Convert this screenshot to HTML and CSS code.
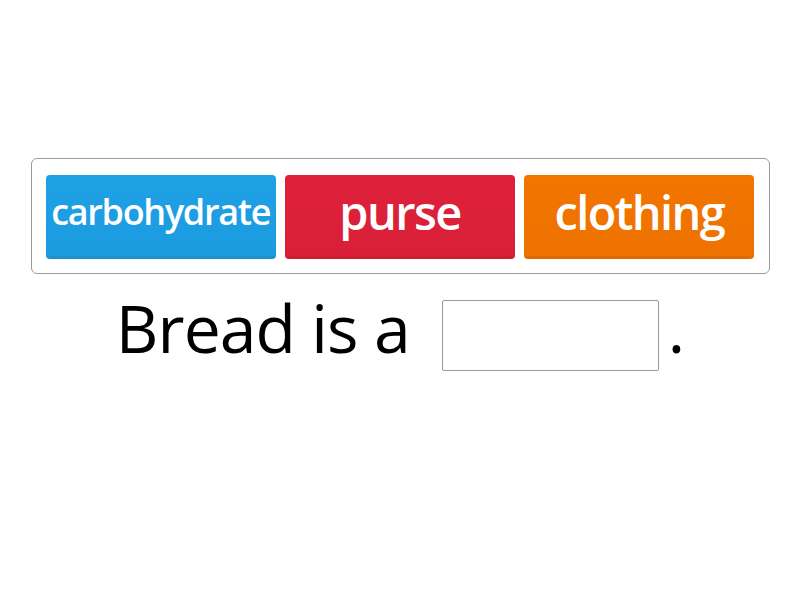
FILE: index.html
```html
<!DOCTYPE html>
<html>
<head>
<meta charset="utf-8">
<link rel="stylesheet" href="styles.css">
</head>
<body>
<div class="page">
  <div class="bank">
    <div class="tile blue small">carbohydrate</div>
    <div class="tile red">purse</div>
    <div class="tile orange">clothing</div>
  </div>
  <div class="sentence">
    <span class="words">Bread is a</span>
    <span class="blank"></span>
    <span class="dot">.</span>
  </div>
</div>
</body>
</html>
```

FILE: styles.css
```css
html, body {
  margin: 0;
  padding: 0;
  background: #fff;
}
body {
  font-family: "Open Sans", "Liberation Sans", sans-serif;
  width: 800px;
  height: 600px;
  overflow: hidden;
}
.page {
  display: flex;
  flex-direction: column;
  align-items: center;
  padding-top: 158px;
}
.bank {
  box-sizing: border-box;
  width: 739px;
  height: 116px;
  border: 1px solid #9a9a9a;
  border-radius: 6px;
  padding: 16px 14px 14px 14px;
  display: flex;
  gap: 9px;
}
.tile {
  flex: 1;
  display: flex;
  align-items: center;
  justify-content: center;
  box-sizing: border-box;
  padding-bottom: 11px;
  color: #fff;
  font-weight: 600;
  font-size: 47px;
  letter-spacing: -1.6px;
  border-radius: 4px;
  box-shadow: inset 0 -3px 0 rgba(0,0,0,0.06);
  white-space: nowrap;
}
.tile.small {
  font-size: 36px;
  letter-spacing: -1.3px;
}
.blue { background: linear-gradient(#1fa1e6, #1b9be0); }
.red { background: linear-gradient(#de213b, #d91f37); }
.orange { background: linear-gradient(#f27500, #ee7200); }
.sentence {
  display: flex;
  align-items: flex-start;
  margin-top: 17px;
  font-size: 66px;
  letter-spacing: -0.9px;
  color: #000;
  line-height: 72px;
}
.words {
  margin-right: 32px;
}
.blank {
  box-sizing: border-box;
  width: 217px;
  height: 71px;
  margin-top: 9px;
  border: 1px solid #9a9a9a;
  border-radius: 2px;
  margin-right: 9px;
}
```
